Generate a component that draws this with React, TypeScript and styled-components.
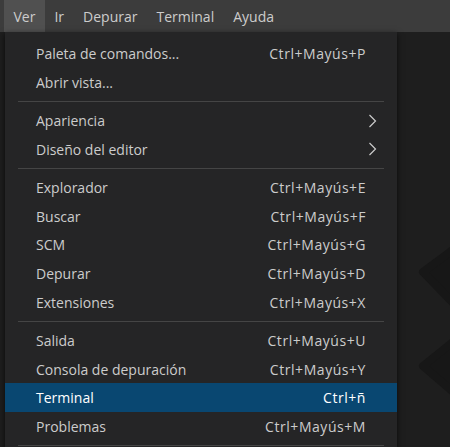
import React from 'react';
import styled, { createGlobalStyle } from 'styled-components';

const colors = {
  editor: '#1e1e1e',
  bar: '#3c3c3c',
  barActive: '#505050',
  menu: '#252526',
  text: '#cccccc',
  selected: '#094771',
  separator: '#454545',
  watermark: '#171717',
};

const font = `font-family: "Open Sans", "Noto Sans", sans-serif;`;

const GlobalStyle = createGlobalStyle`
  html, body {
    margin: 0;
    padding: 0;
    background: ${colors.editor};
  }
`;

const Window = styled.div`
  ${font}
  position: relative;
  width: 450px;
  height: 447px;
  overflow: hidden;
  display: flex;
  flex-direction: column;
  background: ${colors.editor};
  color: ${colors.text};
`;

const MenuBar = styled.div`
  height: 32px;
  flex-shrink: 0;
  display: flex;
  align-items: stretch;
  padding-left: 4px;
  background: ${colors.bar};
`;

const BarItem = styled.div<{ $active?: boolean }>`
  display: flex;
  align-items: center;
  padding: 0 9.5px;
  font-size: 14px;
  background: ${(p) => (p.$active ? colors.barActive : 'transparent')};
`;

const Editor = styled.div`
  flex: 1;
  display: flex;
  justify-content: flex-end;
  align-items: flex-start;
  padding-top: 208px;
`;

const Dropdown = styled.div`
  position: absolute;
  top: 32px;
  left: 5px;
  width: 392px;
  padding-top: 7.6px;
  background: ${colors.menu};
  box-shadow: 0 2px 6px rgba(0, 0, 0, 0.7);
`;

const Row = styled.div<{ $selected?: boolean }>`
  height: 28.75px;
  display: flex;
  align-items: center;
  padding: 0 20px 0 31px;
  font-size: 14px;
  color: ${(p) => (p.$selected ? '#ffffff' : colors.text)};
  background: ${(p) => (p.$selected ? colors.selected : 'transparent')};
`;

const Label = styled.span`
  flex: 1;
  white-space: nowrap;
`;

const Keybinding = styled.span`
  padding-right: 11px;
  letter-spacing: 0.55px;
  white-space: nowrap;
`;

const Separator = styled.div`
  height: 1px;
  margin: 4.1px 13px;
  background: ${colors.separator};
`;

type Item =
  | { label: string; keys?: string; submenu?: boolean; selected?: boolean }
  | 'sep';

const items: Item[] = [
  { label: 'Paleta de comandos...', keys: 'Ctrl+Mayús+P' },
  { label: 'Abrir vista...' },
  'sep',
  { label: 'Apariencia', submenu: true },
  { label: 'Diseño del editor', submenu: true },
  'sep',
  { label: 'Explorador', keys: 'Ctrl+Mayús+E' },
  { label: 'Buscar', keys: 'Ctrl+Mayús+F' },
  { label: 'SCM', keys: 'Ctrl+Mayús+G' },
  { label: 'Depurar', keys: 'Ctrl+Mayús+D' },
  { label: 'Extensiones', keys: 'Ctrl+Mayús+X' },
  'sep',
  { label: 'Salida', keys: 'Ctrl+Mayús+U' },
  { label: 'Consola de depuración', keys: 'Ctrl+Mayús+Y' },
  { label: 'Terminal', keys: 'Ctrl+ñ', selected: true },
  { label: 'Problemas', keys: 'Ctrl+Mayús+M' },
  'sep',
];

function Chevron() {
  return (
    <svg width="9" height="14" viewBox="0 0 9 14">
      <path d="M1.5 1 L7.5 7 L1.5 13" fill="none" stroke={colors.text} strokeWidth="1.2" />
    </svg>
  );
}

function Watermark() {
  return (
    <svg width="40" height="170" viewBox="410 240 40 170">
      <g fill={colors.watermark} stroke={colors.watermark} strokeWidth="8" strokeLinejoin="round">
        <polygon points="458,246 423,272 458,308" />
        <polygon points="458,338 423,366 458,396" />
      </g>
    </svg>
  );
}

export default function App() {
  return (
    <Window>
      <GlobalStyle />
      <MenuBar>
        <BarItem $active>Ver</BarItem>
        <BarItem>Ir</BarItem>
        <BarItem>Depurar</BarItem>
        <BarItem>Terminal</BarItem>
        <BarItem>Ayuda</BarItem>
      </MenuBar>
      <Editor>
        <Watermark />
      </Editor>
      <Dropdown>
        {items.map((item, i) =>
          item === 'sep' ? (
            <Separator key={i} />
          ) : (
            <Row key={i} $selected={item.selected}>
              <Label>{item.label}</Label>
              {item.keys && <Keybinding>{item.keys}</Keybinding>}
              {item.submenu && <Chevron />}
            </Row>
          )
        )}
      </Dropdown>
    </Window>
  );
}
